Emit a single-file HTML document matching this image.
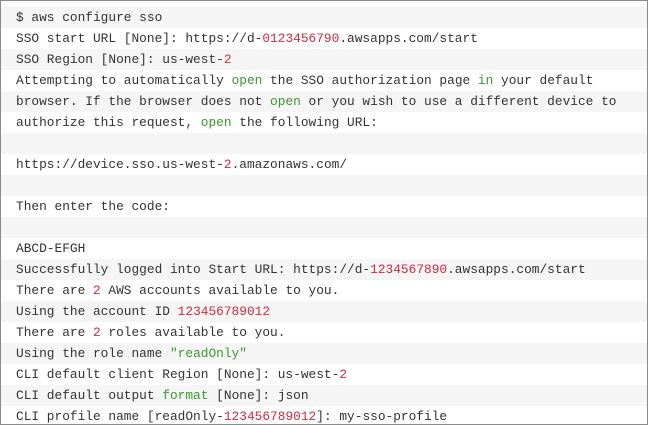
<!DOCTYPE html>
<html><head><style>
html,body{margin:0;padding:0;background:#fff;}
.box{position:absolute;left:0;top:0;width:646px;height:423px;border:1px solid #8a8a8a;overflow:hidden;background:#fff;}
.rows{position:absolute;top:6px;left:0;right:0;}
.r{height:21px;line-height:21px;padding-left:15px;font-family:"Liberation Mono",monospace;font-size:12.83px;color:#333;white-space:pre;}
.r:nth-child(odd){background:#f5f5f5;}
.n{color:#d3293f;}
.g{color:#3a9a2a;}
</style></head><body>
<div class="box"><div class="rows">
<div class="r">$ aws configure sso</div>
<div class="r">SSO start URL [None]: https://d-<span class="n">0123456790</span>.awsapps.com/start</div>
<div class="r">SSO Region [None]: us-west-<span class="n">2</span></div>
<div class="r">Attempting to automatically <span class="g">open</span> the SSO authorization page <span class="g">in</span> your default</div>
<div class="r">browser. If the browser does not <span class="g">open</span> or you wish to use a different device to</div>
<div class="r">authorize this request, <span class="g">open</span> the following URL:</div>
<div class="r"> </div>
<div class="r">https://device.sso.us-west-<span class="n">2</span>.amazonaws.com/</div>
<div class="r"> </div>
<div class="r">Then enter the code:</div>
<div class="r"> </div>
<div class="r">ABCD-EFGH</div>
<div class="r">Successfully logged into Start URL: https://d-<span class="n">1234567890</span>.awsapps.com/start</div>
<div class="r">There are <span class="n">2</span> AWS accounts available to you.</div>
<div class="r">Using the account ID <span class="n">123456789012</span></div>
<div class="r">There are <span class="n">2</span> roles available to you.</div>
<div class="r">Using the role name <span class="g">"readOnly"</span></div>
<div class="r">CLI default client Region [None]: us-west-<span class="n">2</span></div>
<div class="r">CLI default output <span class="g">format</span> [None]: json</div>
<div class="r">CLI profile name [readOnly-<span class="n">123456789012</span>]: my-sso-profile</div>
</div></div>
</body></html>
